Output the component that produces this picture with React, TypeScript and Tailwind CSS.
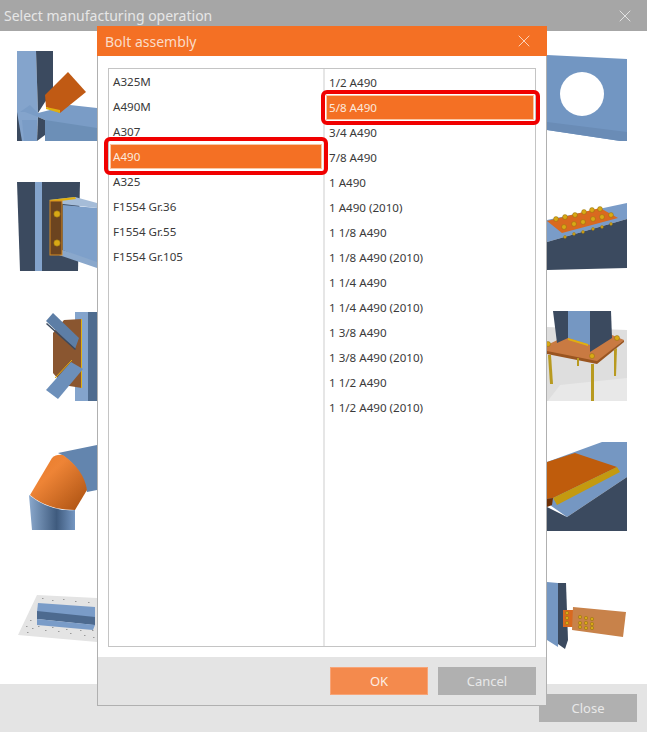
import { X } from "lucide-react";

const leftItems = ["A325M", "A490M", "A307", "A490", "A325", "F1554 Gr.36", "F1554 Gr.55", "F1554 Gr.105"];
const rightItems = [
  "1/2 A490",
  "5/8 A490",
  "3/4 A490",
  "7/8 A490",
  "1 A490",
  "1 A490 (2010)",
  "1 1/8 A490",
  "1 1/8 A490 (2010)",
  "1 1/4 A490",
  "1 1/4 A490 (2010)",
  "1 3/8 A490",
  "1 3/8 A490 (2010)",
  "1 1/2 A490",
  "1 1/2 A490 (2010)",
];

const BLUE = "#7597c2";
const LIGHT = "#84a4cc";
const DARK = "#3b4a5f";
const ORANGE = "#c05a14";
const GOLD = "#e0b010";
const LEG = "#b89a20";

const specks = [
  [42, 598], [52, 600], [63, 599], [75, 601], [88, 602], [32, 628], [45, 630], [58, 631], [70, 633], [84, 635], [93, 637],
  [27, 632], [38, 626], [52, 627], [66, 629], [80, 630], [92, 630], [30, 620], [26, 626],
];

function Thumb({ x, y, children }: { x: number; y: number; children: React.ReactNode }) {
  return (
    <svg width={80} height={90} viewBox={`${x} ${y} 80 90`} className="block">
      {children}
    </svg>
  );
}

function Bolts({ points, r = 1.8 }: { points: number[][]; r?: number }) {
  return (
    <>
      {points.map(([cx, cy]) => (
        <circle key={`${cx}-${cy}`} cx={cx} cy={cy} r={r} fill="#d9a915" stroke="#8f6c10" strokeWidth={0.5} />
      ))}
    </>
  );
}

function LeftThumbs() {
  return (
    <div className="flex flex-col gap-[40px]">
      <Thumb x={17} y={51}>
        <polygon points="17,51 36,51 38,115 37,141 17,141" fill={LIGHT} />
        <polygon points="17,112 22,141 17,141" fill={DARK} />
        <polygon points="36,51 53,51 53,93 45,102 38,113" fill={DARK} />
        <polygon points="20,112 30,105 38,113 70,105 97,108 97,141 45,141 45,120 38,117 25,112" fill="#7a9cc6" />
        <polygon points="45,120 97,128 97,141 45,141" fill="#6c8fb7" />
        <polygon points="38,117 45,120 45,135 37,141" fill={DARK} />
        <polygon points="22,120 37,120 37,141 24,141" fill="#7a9cc6" />
        <polygon points="45,95 68,72 86,92 60,113 46,107" fill={ORANGE} />
        <polygon points="46,107 60,110 60,113 46,109" fill={GOLD} />
      </Thumb>
      <Thumb x={17} y={181}>
        <polygon points="17,182 35,182 35,271 20,271" fill={DARK} />
        <rect x={35} y={182} width={7} height={89} fill={LIGHT} />
        <polygon points="42,182 80,182 78,271 42,271" fill={DARK} />
        <polygon points="63,205 97,208 97,265 63,250" fill="#7ea0ca" />
        <polygon points="49,200 75,197 97,203 97,208 63,204" fill="#a5bcd8" />
        <polygon points="53,253 63,250 97,262 97,268" fill="#8aa8cc" />
        <polygon points="49,200 75,197 76,199 53,202" fill={GOLD} />
        <rect x={50} y={201} width={12} height={54} fill="#6c441f" stroke="#d58a25" strokeWidth={1} />
        <Bolts points={[[57, 214], [57, 243]]} r={3.2} />
      </Thumb>
      <Thumb x={17} y={311}>
        <rect x={75} y={312} width={13} height={90} fill={LIGHT} />
        <rect x={88} y={312} width={9} height={90} fill="#4f6c8f" />
        <polygon points="64,320 82,319 82,388 63,385 53,373 53,333" fill="#8a5630" />
        <rect x={81} y={319} width={1} height={69} fill={GOLD} />
        <polygon points="46,321 53,313 79,338 75,349" fill="#5d7ea6" />
        <polygon points="47,323 76,349 75,350 46,324" fill={DARK} />
        <polygon points="46,390 71,362 83,369 58,399" fill="#6c8fba" />
        <polyline points="55,378 72,360" fill="none" stroke={GOLD} strokeWidth={1} />
      </Thumb>
      <Thumb x={17} y={441}>
        <defs>
          <linearGradient id="elbow" x1="0" y1="0" x2="1" y2="1">
            <stop offset="0" stopColor="#e87a28" />
            <stop offset="0.35" stopColor="#ee8436" />
            <stop offset="1" stopColor="#a84f10" />
          </linearGradient>
          <linearGradient id="tube" x1="0" y1="0" x2="1" y2="0">
            <stop offset="0" stopColor="#8aa8cc" />
            <stop offset="0.6" stopColor="#3f5b7e" />
            <stop offset="1" stopColor="#7597c2" />
          </linearGradient>
        </defs>
        <path d="M58 453 L97 445 L97 490 L87 492 Q82 468 62 455 Z" fill="#6385ae" />
        <path d="M29 495 Q50 512 75 510 L75 530 L32 530 Z" fill="url(#tube)" />
        <path d="M30 495 L52 458 Q56 454 63 455 Q84 470 87 490 L75 510 Q48 510 30 495 Z" fill="url(#elbow)" />
      </Thumb>
      <Thumb x={17} y={571}>
        <polygon points="37,595 97,598 97,642 18,635" fill="#e4e4e4" />
        {specks.map(([cx, cy]) => (
          <rect key={`${cx}-${cy}`} x={cx} y={cy} width={1.5} height={1} fill="#9a9a9a" />
        ))}
        <polygon points="37,612 38,603 95,607 95,625 37,618" fill="#7a9cc8" />
        <polygon points="37,611 95,617 95,625 37,619" fill="#4d6a8f" />
        <polygon points="37,619 95,625 93,630 37,625" fill="#7a9cc8" />
      </Thumb>
    </div>
  );
}

function RightThumbs() {
  return (
    <div className="flex flex-col gap-[40px]">
      <Thumb x={547} y={51}>
        <polygon points="547,55 627,59 627,142 547,130" fill="#7296c2" />
        <polygon points="547,122 627,132 627,142 547,130" fill="#6a8cb6" />
        <circle cx={582} cy={94} r={22} fill="#ffffff" />
      </Thumb>
      <Thumb x={547} y={181}>
        <polygon points="547,220 627,203 627,219 547,242" fill="#7a9cc8" />
        <polygon points="547,242 627,219 627,268 547,270" fill={DARK} />
        <polygon points="547,221 600,208 618,218 562,233" fill="#d9691f" />
        <Bolts
          points={[[556, 219], [565, 217], [575, 215], [584, 212], [592, 210], [600, 209], [564, 227], [574, 224], [583, 222], [593, 219], [602, 217], [611, 215]]}
          r={2.4}
        />
        <Bolts points={[[565, 237], [574, 234], [583, 232], [593, 229], [602, 227], [611, 224]]} r={1.4} />
      </Thumb>
      <Thumb x={547} y={311}>
        <polygon points="547,327 628,330 627,402 547,402" fill="#dedede" />
        <polygon points="560,385 627,378 627,402 547,402" fill="#e8e8e8" />
        <polygon points="547,345 568,335 612,335 624,340 597,362 547,352" fill="#c97a42" />
        <polygon points="547,351 597,361 624,340 624,342 597,364 547,354" fill="#9a5520" />
        <polygon points="553,311 568,311 568,338 557,343" fill={DARK} />
        <polygon points="568,311 590,311 590,345 568,338" fill={BLUE} />
        <polygon points="590,311 611,311 612,338 590,352" fill={DARK} />
        <polygon points="568,338 588,344 588,346 568,340" fill={GOLD} />
        <polygon points="548,355 551,355 553,384 550,384" fill={LEG} />
        <rect x={591} y={364} width={3} height={37} fill={LEG} />
        <polygon points="614,350 617,348 616,376 614,376" fill={LEG} />
        <rect x={577} y={358} width={2} height={8} fill={LEG} />
        <Bolts points={[[548, 344], [592, 356], [617, 338]]} r={2.5} />
      </Thumb>
      <Thumb x={547} y={441}>
        <polygon points="547,462 602,442 627,442 627,477 567,517 547,503" fill="#7597c2" />
        <polygon points="547,507 567,517 627,477 627,531 547,531" fill={DARK} />
        <polygon points="547,462 575,453 617,467 553,498 547,499" fill="#bf5c0c" />
        <polygon points="553,498 617,467 620,472 557,505" fill="#c49a10" />
        <polygon points="547,499 553,498 552,505 547,507" fill="#6e2f05" />
      </Thumb>
      <Thumb x={547} y={571}>
        <polygon points="547,582 558,583 558,647 547,640" fill="#7597c2" />
        <polygon points="558,583 566,583 568,640 565,649 558,644" fill={DARK} />
        <polygon points="563,610 574,610 573,627 563,627" fill="#d9691f" />
        <polygon points="573,607 626,612 623,637 572,630" fill="#c8824a" />
        <Bolts
          points={[[567, 613], [567, 618], [567, 623], [580, 617], [586, 618], [592, 619], [580, 623], [586, 623], [592, 624], [580, 627], [586, 628], [592, 628]]}
          r={1.7}
        />
      </Thumb>
    </div>
  );
}

function Item({ label, selected, ring }: { label: string; selected: boolean; ring: string }) {
  if (selected) {
    return (
      <div className="relative mx-px flex h-[25px] items-center border border-[#f9c7a4] bg-[#f47024] pl-[2px] text-[#fbe9dd]">
        <span className={ring} />
        <span>{label}</span>
      </div>
    );
  }
  return <div className="flex h-[25px] items-center pl-[4px]">{label}</div>;
}

export default function App() {
  return (
    <div
      className="relative h-[732px] w-[649px] overflow-hidden bg-white text-[11.6px] text-[#3a3a3a]"
      style={{ fontFamily: '"Noto Sans", "Open Sans", sans-serif' }}
    >
      {/* Back window */}
      <div className="flex h-[732px] w-[647px] flex-col">
        <div className="flex h-[31px] shrink-0 items-center justify-between bg-[#a6a6a6] pl-[4px] pr-[12px] text-[14px] text-[#e6e6e6]">
          <span>Select manufacturing operation</span>
          <X size={20} strokeWidth={1.1} className="text-[#e8e8e8]" />
        </div>
        <div className="flex flex-1 justify-between pl-[17px] pr-[20px] pt-[20px]">
          <LeftThumbs />
          <RightThumbs />
        </div>
        <div className="flex h-[48px] shrink-0 justify-end bg-[#e4e4e4] pr-[10px] pt-[10px]">
          <button className="h-[28px] w-[98px] bg-[#b0b0b0] pt-px text-[13px] text-[#e8e8e8]">Close</button>
        </div>
      </div>

      {/* Bolt assembly dialog */}
      <div className="absolute left-[97px] top-[26px] flex h-[680px] w-[450px] flex-col border-x border-b border-[#b0b0b0] bg-white">
        <div className="-mx-px flex h-[30px] shrink-0 items-center justify-between bg-[#f47024] pl-[8px] pr-[13px] text-[14px] text-[#fbdcc8]">
          <span>Bolt assembly</span>
          <X size={20} strokeWidth={1.1} className="text-[#fbdcc8]" />
        </div>
        <div className="min-h-0 flex-1 px-[10px] pb-[10px] pt-[12px]">
          <div className="grid h-full grid-cols-[216px_1fr] border border-[#c4c4c4] bg-white">
            <div className="border-r-2 border-[#e6e6e6]">
              {leftItems.map((label) => (
                <Item
                  key={label}
                  label={label}
                  selected={label === "A490"}
                  ring="absolute -left-[7px] -right-[7px] -top-[8px] -bottom-[7px] rounded-[6px] border-[4px] border-[#f00000]"
                />
              ))}
            </div>
            <div className="pt-px">
              {rightItems.map((label) => (
                <Item
                  key={label}
                  label={label}
                  selected={label === "5/8 A490"}
                  ring="absolute -left-[6px] -right-[7px] -top-[6px] -bottom-[6px] rounded-[6px] border-[4px] border-[#f00000]"
                />
              ))}
            </div>
          </div>
        </div>
        <div className="flex h-[48px] shrink-0 justify-end gap-[10px] bg-[#e4e4e4] pr-[10px] pt-[10px]">
          <button className="h-[28px] w-[98px] border border-[#f7a477] bg-[#f48a4d] pt-px text-[13px] text-[#fdeee5]">OK</button>
          <button className="h-[28px] w-[98px] bg-[#b0b0b0] pt-px text-[13px] text-[#e8e8e8]">Cancel</button>
        </div>
      </div>
    </div>
  );
}
